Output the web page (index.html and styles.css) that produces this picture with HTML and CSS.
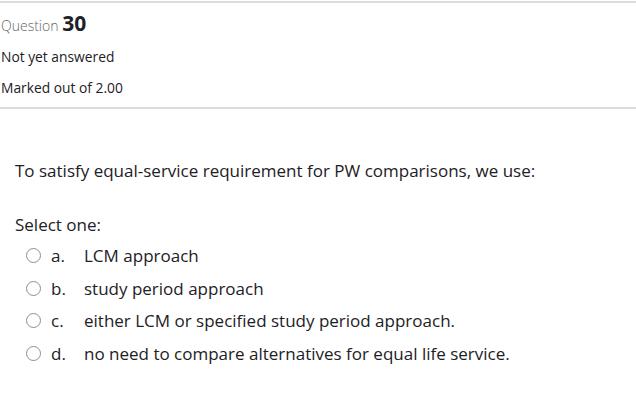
FILE: index.html
```html
<!DOCTYPE html>
<html>
<head>
<meta charset="utf-8">
<link rel="stylesheet" href="styles.css">
</head>
<body>
<div class="info">
  <div class="qno"><span class="qlabel">Question</span> <span class="num">30</span></div>
  <div class="state">Not yet answered</div>
  <div class="grade">Marked out of 2.00</div>
</div>
<div class="content">
  <div class="qtext">To satisfy equal-service requirement for PW comparisons, we use:</div>
  <div class="prompt">Select one:</div>
  <div class="answers">
    <div class="opt"><span class="radio"></span><span class="letter">a.</span><span class="txt">LCM approach</span></div>
    <div class="opt"><span class="radio"></span><span class="letter">b.</span><span class="txt">study period approach</span></div>
    <div class="opt"><span class="radio"></span><span class="letter">c.</span><span class="txt">either LCM or specified study period approach.</span></div>
    <div class="opt"><span class="radio"></span><span class="letter">d.</span><span class="txt">no need to compare alternatives for equal life service.</span></div>
  </div>
</div>
</body>
</html>
```
FILE: styles.css
```css
html, body { margin: 0; padding: 0; background: #fff; }
body { font-family: "Open Sans", "Noto Sans", sans-serif; color: #1d2125; }
.info {
  margin-top: 1px;
  border-top: 2px solid #dcdcdc;
  border-bottom: 2px solid #dcdcdc;
  padding: 5px 1px 11px 1px;
  height: 88px;
}
.qno { font-size: 14px; line-height: 30px; }
.qlabel { color: #666; font-weight: 300; }
.num { font-size: 21px; font-weight: 700; color: #1d2125; }
.state, .grade { font-size: 13.8px; line-height: 31px; }
.content { padding: 50px 15px 0 15px; }
.qtext { font-size: 17px; line-height: 24px; }
.prompt { font-size: 17px; line-height: 24px; margin-top: 30px; }
.answers { margin-top: 2px; padding-left: 11px; }
.opt { display: flex; align-items: center; height: 32.7px; font-size: 17px; }
.radio { width: 15px; height: 15px; border: 1.3px solid #8e8e8e; border-radius: 50%; box-sizing: border-box; margin-right: 10px; }
.letter { width: 33px; }
```
